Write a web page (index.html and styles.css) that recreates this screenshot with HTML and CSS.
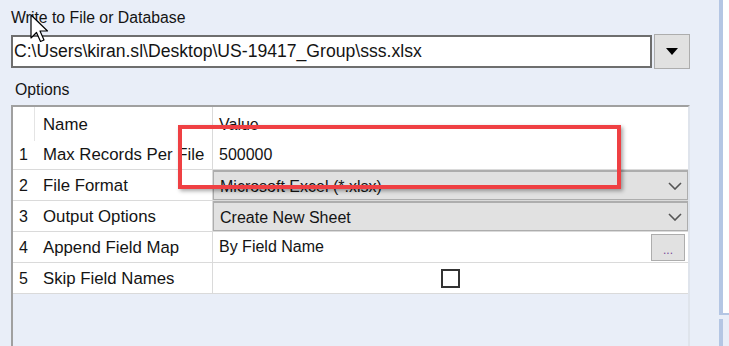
FILE: index.html
```html
<!DOCTYPE html>
<html>
<head>
<meta charset="utf-8">
<link rel="stylesheet" href="styles.css">
</head>
<body>
<div class="screen">
  <div class="panel">
    <div class="label">Write to File or Database</div>
    <div class="pathrow">
      <div class="pathbox">C:\Users\kiran.sl\Desktop\US-19417_Group\sss.xlsx</div>
      <div class="dropbtn"><svg width="12" height="7" viewBox="0 0 12 7"><path d="M0 0H12L6 7Z" fill="#000"/></svg></div>
    </div>
    <div class="label options">Options</div>
    <div class="grid">
      <div class="row head">
        <div class="num"></div>
        <div class="name">Name</div>
        <div class="val">Value</div>
      </div>
      <div class="row">
        <div class="num">1</div>
        <div class="name">Max Records Per File</div>
        <div class="val">500000</div>
      </div>
      <div class="row">
        <div class="num">2</div>
        <div class="name">File Format</div>
        <div class="val combo"><span>Microsoft Excel (*.xlsx)</span><svg class="chev" width="14" height="8" viewBox="0 0 14 8"><path d="M1 1L7 7L13 1" fill="none" stroke="#555" stroke-width="1.6"/></svg></div>
      </div>
      <div class="row">
        <div class="num">3</div>
        <div class="name">Output Options</div>
        <div class="val combo"><span>Create New Sheet</span><svg class="chev" width="14" height="8" viewBox="0 0 14 8"><path d="M1 1L7 7L13 1" fill="none" stroke="#555" stroke-width="1.6"/></svg></div>
      </div>
      <div class="row">
        <div class="num">4</div>
        <div class="name">Append Field Map</div>
        <div class="val withbtn"><span>By Field Name</span><div class="ellip">...</div></div>
      </div>
      <div class="row">
        <div class="num">5</div>
        <div class="name">Skip Field Names</div>
        <div class="val center"><div class="check"></div></div>
      </div>
    </div>
  </div>
  <div class="side">
    <div class="sidepanel"></div>
    <div class="sidebox"></div>
  </div>
</div>
<div class="highlight"></div>
<svg class="cursor" width="20" height="30" viewBox="0 0 20 30"><path d="M1 1V24L6.5 18.5L10.5 27.5L14 26L10 17H17.5Z" fill="#fff" stroke="#000" stroke-width="1.2" stroke-linejoin="round"/></svg>
</body>
</html>
```
FILE: styles.css
```css
html, body {
  margin: 0;
  padding: 0;
}
body {
  width: 729px;
  height: 346px;
  overflow: hidden;
  background: #e9eef8;
  font-family: "Liberation Sans", Arial, sans-serif;
  font-size: 16px;
  color: #141414;
  position: relative;
}
.screen {
  display: flex;
  height: 346px;
}
.panel {
  width: 679px;
  padding-left: 11px;
  padding-top: 7px;
  display: flex;
  flex-direction: column;
}
.label {
  height: 21px;
  line-height: 21px;
  font-size: 15.8px;
}
.options {
  padding-left: 4px;
  margin-top: 12px;
  height: 18px;
  line-height: 18px;
}
.pathrow {
  display: flex;
  margin-top: 6px;
  height: 35px;
}
.pathbox {
  width: 642px;
  height: 29px;
  margin-top: 1px;
  border: 2px solid #6e6e6e;
  background: #fff;
  line-height: 29px;
  padding-left: 1px;
  white-space: nowrap;
  font-size: 17.6px;
}
.dropbtn {
  width: 34px;
  height: 33px;
  margin-left: 2px;
  border: 1px solid #adadad;
  background: #e1e1e1;
  display: flex;
  align-items: center;
  justify-content: center;
}
.grid {
  flex: 1;
  margin-top: 6px;
  border-top: 2px solid #a0a0a0;
  border-left: 2px solid #a0a0a0;
  border-right: 2px solid #dfe4ec;
}
.row {
  display: grid;
  grid-template-columns: 22px 178px 1fr;
  height: 30px;
  background: #fff;
  border-bottom: 1px solid #dadada;
}
.row.head {
  height: 32px;
  border-bottom: none;
}
.num {
  padding-left: 6px;
  padding-top: 2px;
  line-height: 28px;
}
.head .num {
  border-right: 1px solid #e4e4e4;
}
.name {
  padding-left: 8px;
  padding-top: 2px;
  line-height: 28px;
  white-space: nowrap;
  border-right: 1px solid #dadada;
  font-size: 16.8px;
}
.head .name,
.head .val {
  line-height: 32px;
  padding-top: 2px;
}
.val {
  padding-left: 6px;
  padding-top: 2px;
  line-height: 28px;
  white-space: nowrap;
  position: relative;
}
.combo {
  background: #e1e1e1;
  border: 1px solid #adadad;
  border-top: 2px solid #adadad;
  padding-top: 1px;
  line-height: 25px;
  display: flex;
  justify-content: space-between;
  align-items: center;
  padding-right: 5px;
}
.withbtn {
  display: flex;
  justify-content: space-between;
  align-items: center;
  padding-top: 0;
  padding-right: 3px;
}
.ellip {
  width: 32px;
  height: 25px;
  background: #e1e1e1;
  border: 1px solid #adadad;
  line-height: 30px;
  text-align: center;
  font-size: 12px;
  color: #7a4a9a;
}
.center {
  display: flex;
  align-items: center;
  justify-content: center;
  padding-left: 0;
  padding-top: 0;
}
.check {
  width: 15px;
  height: 15px;
  border: 2px solid #333;
  background: #fff;
}
.side {
  width: 50px;
  display: flex;
  flex-direction: column;
  padding-left: 29px;
}
.sidepanel {
  height: 313px;
  border-left: 4px solid #b4c6e4;
  border-bottom: 2px solid #b4c6e4;
  background: #fff;
}
.sidebox {
  flex: 1;
  border-left: 4px solid #b4c6e4;
  padding-left: 2px;
  margin-top: 4px;
  background: #e9eef8;
}
.highlight {
  position: absolute;
  left: 178px;
  top: 125px;
  width: 435px;
  height: 56px;
  border: 4px solid #ef4043;
  box-shadow: 2px 2px 4px rgba(0,0,0,0.35);
}
.cursor {
  position: absolute;
  left: 30px;
  top: 14px;
}
```
